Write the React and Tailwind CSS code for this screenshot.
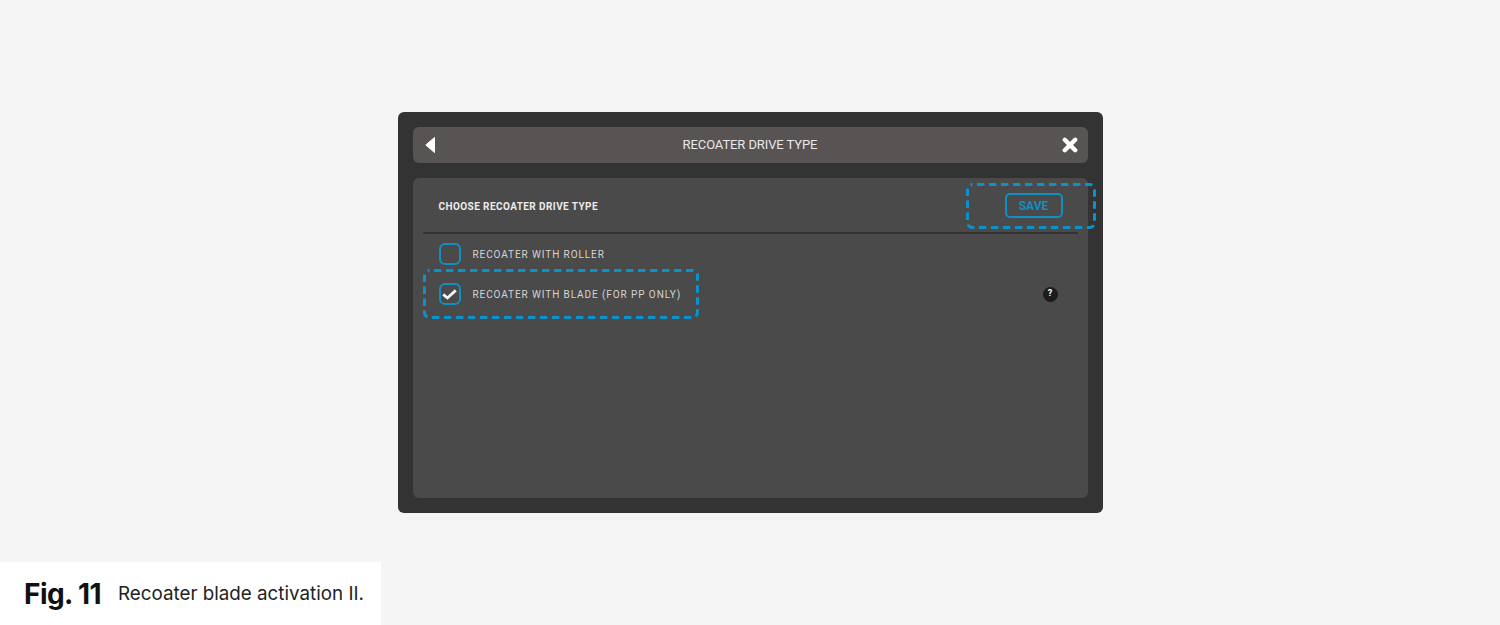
import React from 'react';

function DashedBox({ width, height, className }) {
  return (
    <svg width={width} height={height} className={`absolute ${className}`}>
      <rect
        x="1.5"
        y="1.5"
        width={width - 3}
        height={height - 3}
        rx="5"
        fill="none"
        stroke="#0b92cb"
        strokeWidth="3"
        strokeDasharray="7.4 4.6"
        strokeDashoffset="-4.5"
      />
    </svg>
  );
}

function Checkbox({ checked }) {
  return (
    <span className="w-[22px] h-[22px] rounded-[6px] border-2 border-[#0f8fc4] flex items-center justify-center shrink-0">
      {checked && (
        <svg width="15" height="11" viewBox="0 0 15 11">
          <path d="M1.2 5.4 L5.4 9 L13.8 1.4" fill="none" stroke="#f4f4f4" strokeWidth="2.8" />
        </svg>
      )}
    </span>
  );
}

export default function App() {
  return (
    <div className="h-[625px] w-[1500px] bg-[#f5f5f5] flex flex-col relative overflow-hidden font-['Roboto',sans-serif]">
      <div className="flex-1 flex justify-center pt-[112px]">
        {/* Dialog */}
        <div className="w-[705px] h-[401px] bg-[#333333] rounded-[6px] p-[15px] flex flex-col gap-[15px]">
          {/* Title bar */}
          <div className="h-[36px] shrink-0 bg-[#575453] rounded-[6px] flex items-center justify-between px-[10px]">
            <span className="w-[24px] flex pl-[2px]">
              <svg width="10" height="16" viewBox="0 0 10 16" className="mt-[-1px]">
                <path d="M9.5 0.5 V15.5 L0.8 8 Z" fill="#ffffff" stroke="#ffffff" strokeLinejoin="round" />
              </svg>
            </span>
            <span className="text-[13px] text-[#e8e8e8] tracking-[-0.1px]">RECOATER DRIVE TYPE</span>
            <span className="w-[24px] flex justify-end">
              <svg width="16" height="16" viewBox="0 0 16 16" className="mr-[-1px]">
                <path d="M2.8 2.8 L13.2 13.2 M13.2 2.8 L2.8 13.2" stroke="#ffffff" strokeWidth="4.4" strokeLinecap="round" />
              </svg>
            </span>
          </div>

          {/* Panel */}
          <div className="flex-1 bg-[#4a4a4a] rounded-[6px] flex flex-col">
            <div className="h-[56px] mx-[10px] border-b-2 border-[#333333] flex items-center justify-between pl-[15px] pr-[15px] shrink-0">
              <span className="text-[10px] font-bold text-[#ececec] tracking-[0.42px] ml-[1px] mt-[2px]">CHOOSE RECOATER DRIVE TYPE</span>
              <button className="w-[58px] h-[25px] mt-[1px] rounded-[5px] border-2 border-[#0f8fc4] text-[#0f8fc4] text-[12px] font-bold flex items-center justify-center">
                SAVE
              </button>
            </div>
            <div className="h-[40px] flex items-center gap-[12px] pl-[26px] pr-[30px]">
              <Checkbox />
              <span className="text-[10px] text-[#d4d4d4] tracking-[0.91px]">RECOATER WITH ROLLER</span>
            </div>
            <div className="h-[40px] flex items-center gap-[12px] pl-[26px] pr-[30px]">
              <Checkbox checked />
              <span className="text-[10px] text-[#d4d4d4] tracking-[0.91px] flex-1">RECOATER WITH BLADE (FOR PP ONLY)</span>
              <span className="w-[15px] h-[15px] rounded-full bg-[#1c1c1c] text-white text-[9px] font-bold flex items-center justify-center">?</span>
            </div>
          </div>
        </div>
      </div>

      {/* Highlights over the dialog */}
      <DashedBox width={276} height={50} className="left-[423px] top-[269px]" />
      <DashedBox width={130} height={46} className="left-[966px] top-[183px]" />

      {/* Caption */}
      <div className="absolute left-0 bottom-0 w-[381px] h-[63px] bg-white flex items-center pl-[24px] font-['Inter',sans-serif] text-[#111111]">
        <span className="text-[28px] font-bold tracking-[-0.55px] w-[94px] shrink-0">Fig. 11</span>
        <span className="text-[18.8px] text-[#222222] mt-[1px]">Recoater blade activation II.</span>
      </div>
    </div>
  );
}
